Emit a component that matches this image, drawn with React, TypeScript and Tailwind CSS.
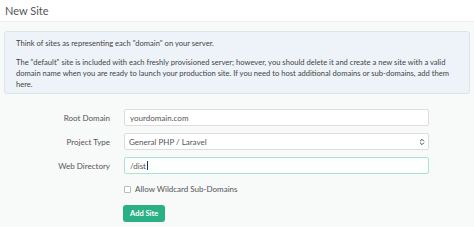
import { ChevronsUpDown } from "lucide-react";

const font = { fontFamily: "Lato, 'Open Sans', sans-serif" };

function Row({ label, children }: { label: string; children: React.ReactNode }) {
  return (
    <div className="flex items-center">
      <label className="w-[111px] shrink-0 pr-[1px] text-right text-[8px] text-[#555]">{label}</label>
      <div className="ml-[13px] w-[305px]">{children}</div>
    </div>
  );
}

export default function App() {
  return (
    <div className="h-[227px] w-[474px] overflow-hidden bg-[#f8f9f9] text-[#4a4a4a]" style={font}>
      <div className="h-[22px] border-b border-[#efefef] bg-white px-[5px] pt-[3px] text-[11px] text-[#555]">
        New Site
      </div>
      <div className="px-[4px] pt-[9px]">
        <div className="rounded-[3px] border border-[#dbe5ec] bg-[#edf3f8] px-[11px] pb-[3px] pt-[6px] text-[7.6px] leading-[11px] text-[#444]">
          <p>Think of sites as representing each "domain" on your server.</p>
          <p className="mt-[8px]">
            The "default" site is included with each freshly provisioned server; however, you should delete it and create a new site with a valid domain name when you are ready to launch your production site. If you need to host additional domains or sub-domains, add them here.
          </p>
        </div>
      </div>
      <div className="mt-[15px] flex flex-col gap-[7px]">
        <Row label="Root Domain">
          <div className="flex h-[17px] items-center rounded-[2px] border border-[#ddd] bg-white px-[5px] text-[8px] text-[#555]">
            yourdomain.com
          </div>
        </Row>
        <Row label="Project Type">
          <div className="flex h-[17px] items-center justify-between rounded-[2px] border border-[#ddd] bg-white pl-[4px] pr-[2px] text-[8px] text-[#555]">
            <span>General PHP / Laravel</span>
            <ChevronsUpDown className="h-[8px] w-[8px] text-[#444]" strokeWidth={3} />
          </div>
        </Row>
        <Row label="Web Directory">
          <div className="flex h-[17px] items-center rounded-[2px] border border-[#a9e5d1] bg-[#fdfffe] px-[5px] text-[8px] text-[#555]">
            /dist<span className="ml-[1px] h-[9px] w-px bg-[#333]" />
          </div>
        </Row>
      </div>
      <div className="ml-[124px] mt-[9px] flex items-center gap-[4px] text-[8px] text-[#555]">
        <span className="h-[7px] w-[7px] rounded-[1px] border border-[#bbb] bg-white" />
        Allow Wildcard Sub-Domains
      </div>
      <div className="ml-[123px] mt-[3px]">
        <button className="h-[17px] rounded-[3px] bg-[#2bb085] px-[7px] text-[7.5px] font-bold text-white">
          Add Site
        </button>
      </div>
    </div>
  );
}
